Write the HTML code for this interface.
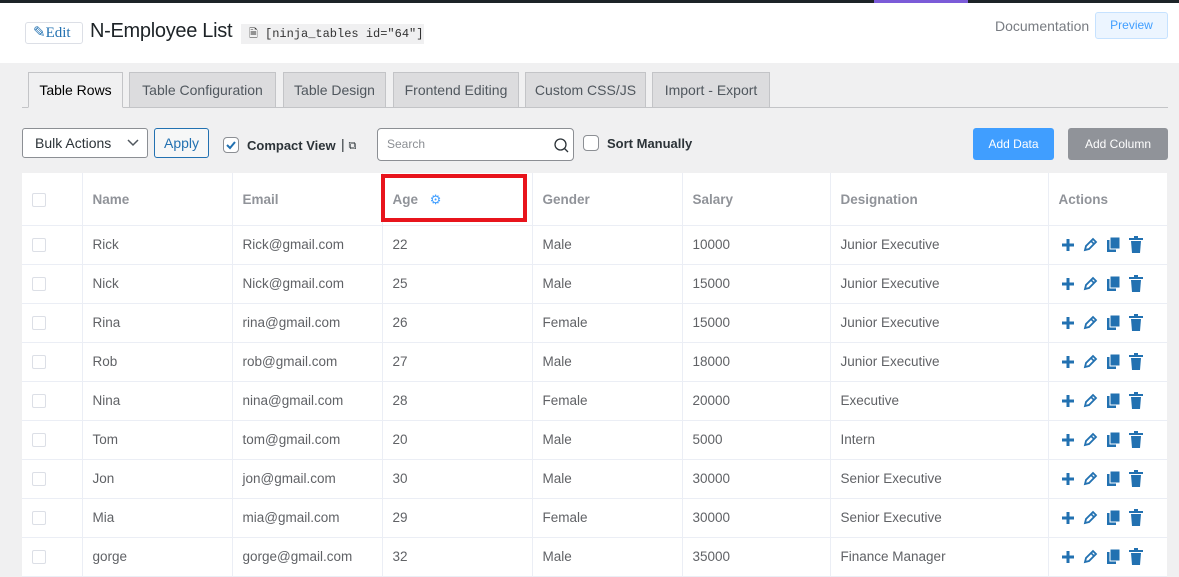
<!DOCTYPE html>
<html><head><meta charset="utf-8"><style>
*{box-sizing:border-box;margin:0;padding:0}
body{width:1179px;height:575px;overflow:hidden;background:#f0f0f1;font-family:"Liberation Sans",sans-serif;position:relative;color:#606266}
.top{position:absolute;left:0;top:0;width:1179px;height:3px;background:#1d2327}
.top i{position:absolute;left:874px;width:94px;height:3px;background:#7b5bd8}
.hdr{position:absolute;left:0;top:3px;width:1179px;height:60px;background:#fff}
.edit{position:absolute;left:25px;top:19px;width:58px;height:22px;border:1px solid #dcdfe6;border-radius:3px;font-family:"Liberation Serif",serif;font-size:15px;color:#2271b1;padding-left:7px;line-height:20px}
.title{position:absolute;left:90px;top:17px;font-size:20px;color:#1d2327;letter-spacing:-0.3px}
.sc{position:absolute;left:241px;top:21px;height:20px;width:183px;background:#f0f0f1;font-family:"Liberation Mono",monospace;font-size:12px;color:#333;line-height:20px;padding-left:24px}
.doc{position:absolute;left:995px;top:15px;font-size:14px;color:#787c82}
.prev{position:absolute;left:1095px;top:9px;width:73px;height:27px;border:1px solid #c6e2ff;background:#ecf5ff;border-radius:3px;color:#409eff;font-size:12px;text-align:center;line-height:25px}
.tabline{position:absolute;left:22px;top:107px;width:1146px;height:1px;background:#c3c4c7}
.tab{position:absolute;top:72px;height:36px;border:1px solid #c3c4c7;background:#dcdcde;color:#50575e;font-size:14px;line-height:34px;text-align:center}
.tab.a{background:#f0f0f1;border-bottom-color:#f0f0f1;color:#000}
.sel{position:absolute;left:22px;top:128px;width:126px;height:30px;border:1px solid #8c8f94;border-radius:3px;background:#fff;font-size:14px;color:#2c3338;line-height:28px;padding-left:12px}
.apply{position:absolute;left:154px;top:128px;width:55px;height:30px;border:1px solid #2271b1;border-radius:3px;background:#f6f7f7;color:#2271b1;font-size:14px;text-align:center;line-height:28px}
.cb{position:absolute;width:16px;height:16px;border:1px solid #8c8f94;border-radius:4px;background:#fff}
.lbl{position:absolute;font-size:13px;font-weight:bold;color:#2c3338}
.search{position:absolute;left:377px;top:128px;width:197px;height:33px;border:1px solid #8c8f94;border-radius:4px;background:#fff;font-size:12px;color:#8c8f94;line-height:31px;padding-left:9px}
.btn{position:absolute;top:128px;height:32px;color:#fff;font-size:12px;text-align:center;line-height:32px;border-radius:3px}
table{position:absolute;left:22px;top:173px;width:1145px;border-collapse:collapse;background:#fff;font-size:13.5px}
td,th{border:1px solid #ebeef5;text-align:left;padding:0 0 0 10px;height:39px;font-weight:normal;line-height:16px}
th{height:52px;color:#909399;font-weight:bold;padding-top:2px}
tr td:first-child,tr th:first-child{border-left:none}
tr td:last-child,tr th:last-child{border-right:none}
tr:first-child th{border-top:none}
.c{display:inline-block;width:14px;height:14px;border:1px solid #dcdfe6;border-radius:2px;vertical-align:middle}
.red{position:absolute;left:381px;top:174px;width:146px;height:48px;border:4px solid #e8141c}
.ic{display:inline-flex;gap:8px;align-items:center;vertical-align:middle;margin-left:2px}
</style></head><body>
<div class="top"><i></i></div>
<div class="hdr">
<div class="edit">✎Edit</div>
<div class="title">N-Employee List</div>
<div class="sc"><span style="position:absolute;left:8px;top:0;font-family:'DejaVu Sans';font-size:11px">🗎</span>[ninja_tables id="64"]</div>
<div class="doc">Documentation</div>
<div class="prev">Preview</div>
</div>
<div class="tabline"></div>
<div class="tab a" style="left:28px;width:95px">Table Rows</div>
<div class="tab" style="left:129px;width:147px">Table Configuration</div>
<div class="tab" style="left:283px;width:103px">Table Design</div>
<div class="tab" style="left:393px;width:126px">Frontend Editing</div>
<div class="tab" style="left:525px;width:121px">Custom CSS/JS</div>
<div class="tab" style="left:652px;width:118px">Import - Export</div>
<div class="sel">Bulk Actions<svg style="position:absolute;right:8px;top:10px" width="12" height="8"><path d="M1 1l5 5 5-5" stroke="#50575e" stroke-width="1.5" fill="none"/></svg></div>
<div class="apply">Apply</div>
<div class="cb" style="left:223px;top:137px"><svg width="14" height="14"><path d="M3 7l3 3 5-6" stroke="#2271b1" stroke-width="2" fill="none"/></svg></div>
<div class="lbl" style="left:247px;top:138px">Compact View</div>
<div style="position:absolute;left:341px;top:136px;font-size:14px;color:#2c3338">| <span style="font-size:11px">⧉</span></div>
<div class="search">Search<svg style="position:absolute;right:4px;top:9px" width="15" height="15"><circle cx="6.5" cy="6.5" r="5.5" stroke="#2c3338" stroke-width="1.3" fill="none"/><path d="M10.5 10.5l3.5 3.5" stroke="#2c3338" stroke-width="1.3"/></svg></div>
<div class="cb" style="left:583px;top:135px"></div>
<div class="lbl" style="left:607px;top:136px">Sort Manually</div>
<div class="btn" style="left:973px;width:81px;background:#409eff">Add Data</div>
<div class="btn" style="left:1068px;width:100px;background:#909399">Add Column</div>
<table>
<colgroup><col style="width:60px"><col style="width:150px"><col style="width:150px"><col style="width:150px"><col style="width:150px"><col style="width:148px"><col style="width:218px"><col style="width:119px"></colgroup>
<tr><th><span class="c"></span></th><th>Name</th><th>Email</th><th>Age <span style="color:#409eff;font-weight:normal;margin-left:8px;font-size:13px">⚙</span></th><th>Gender</th><th>Salary</th><th>Designation</th><th>Actions</th></tr>
<tbody id="b"></tbody>
</table>
<div class="red"></div>
<script>
var d=[["Rick","Rick@gmail.com",22,"Male",10000,"Junior Executive"],["Nick","Nick@gmail.com",25,"Male",15000,"Junior Executive"],["Rina","rina@gmail.com",26,"Female",15000,"Junior Executive"],["Rob","rob@gmail.com",27,"Male",18000,"Junior Executive"],["Nina","nina@gmail.com",28,"Female",20000,"Executive"],["Tom","tom@gmail.com",20,"Male",5000,"Intern"],["Jon","jon@gmail.com",30,"Male",30000,"Senior Executive"],["Mia","mia@gmail.com",29,"Female",30000,"Senior Executive"],["gorge","gorge@gmail.com",32,"Male",35000,"Finance Manager"]];
var ic='<span class="ic"><svg width="14" height="14"><path d="M7 1v12M1 7h12" stroke="#2271b1" stroke-width="3"/></svg><svg width="15" height="15"><path d="M2 13l1-4 7-7 3 3-7 7z" fill="none" stroke="#2271b1" stroke-width="1.8"/><path d="M8 4l3 3" stroke="#2271b1" stroke-width="1.6"/></svg><svg width="15" height="17"><rect x="1" y="4" width="9" height="12" fill="#2271b1"/><rect x="4" y="1" width="10" height="12" fill="#2271b1" stroke="#fff" stroke-width="1"/></svg><svg width="14" height="17"><rect x="0" y="2" width="14" height="2" fill="#2271b1"/><rect x="5" y="0" width="4" height="2" fill="#2271b1"/><path d="M2 5h10l-1 12H3z" fill="#2271b1"/></svg></span>';
var h="";d.forEach(function(r){h+='<tr><td><span class="c"></span></td>';r.forEach(function(v){h+="<td>"+v+"</td>"});h+="<td>"+ic+"</td></tr>"});
document.getElementById("b").innerHTML=h;
</script>
</body></html>
